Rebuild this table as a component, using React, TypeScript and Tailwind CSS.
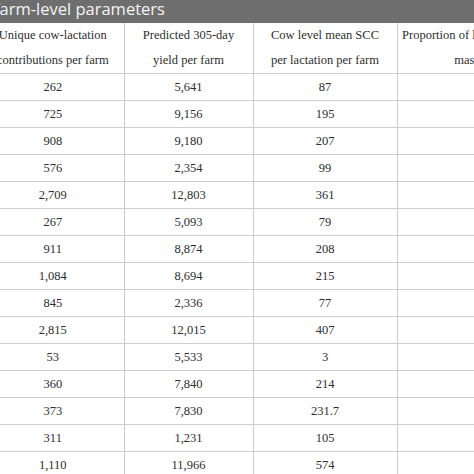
const rows: [string, string, string][] = [
  ['262', '5,641', '87'],
  ['725', '9,156', '195'],
  ['908', '9,180', '207'],
  ['576', '2,354', '99'],
  ['2,709', '12,803', '361'],
  ['267', '5,093', '79'],
  ['911', '8,874', '208'],
  ['1,084', '8,694', '215'],
  ['845', '2,336', '77'],
  ['2,815', '12,015', '407'],
  ['53', '5,533', '3'],
  ['360', '7,840', '214'],
  ['373', '7,830', '231.7'],
  ['311', '1,231', '105'],
  ['1,110', '11,966', '574'],
];

const headers: [string, string][] = [
  ['Unique cow-lactation', 'contributions per farm'],
  ['Predicted 305-day', 'yield per farm'],
  ['Cow level mean SCC', 'per lactation per farm'],
  ['Proportion of lactations with', 'mastitis'],
];

export default function App() {
  return (
    <div className="w-[474px] h-[474px] overflow-hidden bg-white">
      {/* caption bar, left edge of the title is cropped */}
      <div className="h-[23px] bg-[#6e6e6e] text-[#f4f4f4] text-[16.5px] leading-[18px] font-['Open_Sans',sans-serif] whitespace-nowrap">
        <span className="inline-block ml-[-6px]">farm-level parameters</span>
      </div>

      <table className="table-fixed border-collapse ml-[-18px] w-[568px] font-['Liberation_Serif',serif] text-[#2e2e2e] text-[12.5px]">
        <colgroup>
          <col className="w-[142px]" />
          <col className="w-[129px]" />
          <col className="w-[144px]" />
          <col className="w-[153px]" />
        </colgroup>
        <thead>
          <tr className="h-[50px] border-b border-[#cdcdcd]">
            {headers.map(([a, b], i) => (
              <th
                key={i}
                className="font-normal text-center align-middle leading-[25px] whitespace-nowrap border-l border-[#cdcdcd] first:border-l-0"
              >
                {a}
                <br />
                {b}
              </th>
            ))}
          </tr>
        </thead>
        <tbody>
          {rows.map((r, i) => (
            <tr key={i} className="h-[27px] border-b border-[#cdcdcd]">
              <td className="text-center">{r[0]}</td>
              <td className="text-center border-l border-[#cdcdcd]">{r[1]}</td>
              <td className="text-center border-l border-[#cdcdcd]">{r[2]}</td>
              <td className="border-l border-[#cdcdcd]"></td>
            </tr>
          ))}
        </tbody>
      </table>
    </div>
  );
}
